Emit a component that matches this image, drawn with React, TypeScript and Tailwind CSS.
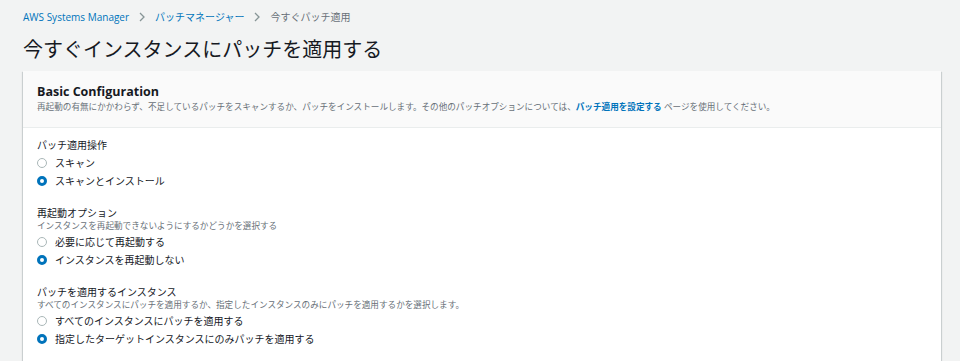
import React from "react";

type Option = { label: string; checked?: boolean };

type Group = {
  label: string;
  description?: string;
  options: Option[];
};

const GROUPS: Group[] = [
  {
    label: "パッチ適用操作",
    options: [{ label: "スキャン" }, { label: "スキャンとインストール", checked: true }],
  },
  {
    label: "再起動オプション",
    description: "インスタンスを再起動できないようにするかどうかを選択する",
    options: [{ label: "必要に応じて再起動する" }, { label: "インスタンスを再起動しない", checked: true }],
  },
  {
    label: "パッチを適用するインスタンス",
    description:
      "すべてのインスタンスにパッチを適用するか、指定したインスタンスのみにパッチを適用するかを選択します。",
    options: [
      { label: "すべてのインスタンスにパッチを適用する" },
      { label: "指定したターゲットインスタンスにのみパッチを適用する", checked: true },
    ],
  },
];

function Chevron() {
  return (
    <svg width="8" height="10" viewBox="0 0 8 10" className="mx-[9px]">
      <path d="M2 1l4 4-4 4" fill="none" stroke="#879596" strokeWidth="1.3" />
    </svg>
  );
}

function Radio({ checked }: { checked?: boolean }) {
  return checked ? (
    <span className="w-[10px] h-[10px] rounded-full border-[3px] border-[#0073bb] bg-white flex-shrink-0" />
  ) : (
    <span className="w-[10px] h-[10px] rounded-full border border-[#aab7b8] bg-white flex-shrink-0" />
  );
}

export default function App() {
  return (
    <div
      className="min-h-screen bg-[#f2f3f3] pl-[23px] pr-[19px] text-[#16191f]"
      style={{ fontFamily: '"Open Sans", "Noto Sans CJK JP", sans-serif' }}
    >
      <nav className="pt-[10px] h-[24px] flex items-center text-[10px] leading-[14px]">
        <span className="text-[#0073bb]">AWS Systems Manager</span>
        <Chevron />
        <span className="text-[#0073bb]">パッチマネージャー</span>
        <Chevron />
        <span className="text-[#687078]">今すぐパッチ適用</span>
      </nav>

      <h1 className="mt-[12px] text-[20px] leading-[28px] font-normal">今すぐインスタンスにパッチを適用する</h1>

      <section className="mt-[7px] bg-white shadow-[0_1px_1px_0_rgba(0,28,36,0.25),1px_1px_1px_0_rgba(0,28,36,0.12),-1px_1px_1px_0_rgba(0,28,36,0.12)]">
        <header className="bg-[#fafafa] border-b border-[#eaeded] px-[14px] pt-[13px] pb-[14px]">
          <h2 className="text-[12.5px] leading-[16px] font-bold">Basic Configuration</h2>
          <p className="mt-[1px] text-[8.6px] leading-[12px] text-[#687078] whitespace-nowrap">
            再起動の有無にかかわらず、不足しているパッチをスキャンするか、パッチをインストールします。その他のパッチオプションについては、
            <span className="text-[#0073bb] font-bold">パッチ適用を設定する</span> ページを使用してください。
          </p>
        </header>

        <div className="px-[14px] pt-[10px] pb-[16px] flex flex-col gap-[16px]">
          {GROUPS.map((group) => (
            <div key={group.label} className="flex flex-col">
              <div className="text-[10px] leading-[14px]">{group.label}</div>
              {group.description && (
                <div className="text-[8.6px] leading-[12px] text-[#687078] whitespace-nowrap">{group.description}</div>
              )}
              <div className={group.description ? "mt-[1px] flex flex-col" : "mt-[2px] flex flex-col"}>
                {group.options.map((opt) => (
                  <label key={opt.label} className="h-[18px] flex items-center gap-[8px] text-[10px] pl-[0px]">
                    <Radio checked={opt.checked} />
                    <span>{opt.label}</span>
                  </label>
                ))}
              </div>
            </div>
          ))}
        </div>
      </section>
    </div>
  );
}
